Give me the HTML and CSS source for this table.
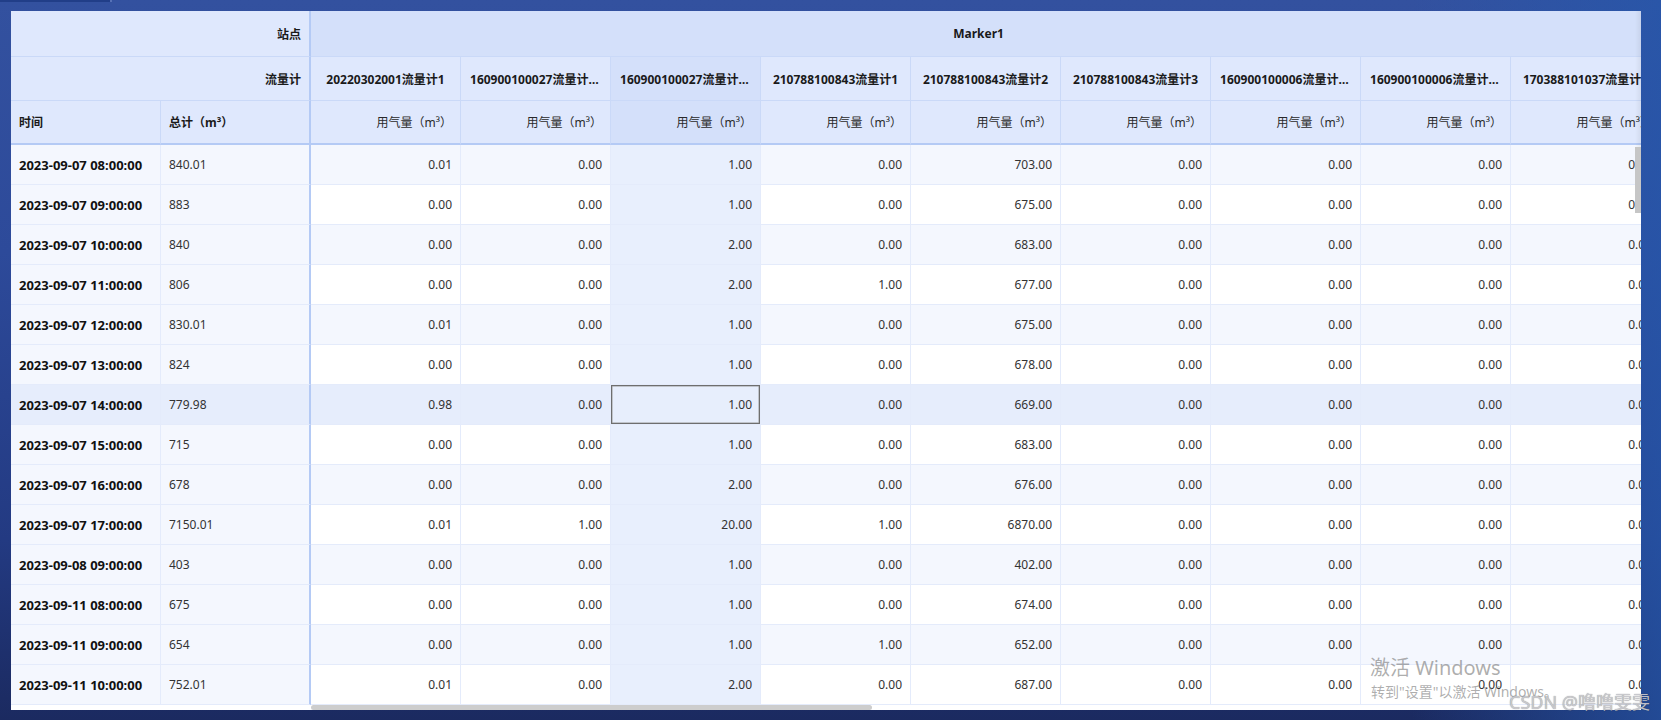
FILE: index.html
```html
<!DOCTYPE html>
<html lang="zh-CN">
<head>
<meta charset="utf-8">
<title>流量计报表</title>
<link rel="stylesheet" href="styles.css">
</head>
<body>
<div class="tab"></div>
<div class="frame">
  <div class="scroller">
    <table>
      <colgroup>
        <col class="c"><col class="c"><col class="c"><col class="c"><col class="c"><col class="c"><col class="c"><col class="c"><col class="c"><col class="c"><col class="c">
      </colgroup>
      <thead>
        <tr class="h1">
          <th colspan="2" class="corner fz2">站点</th>
          <th colspan="9" class="station"><span class="station-name">Marker1</span></th>
        </tr>
        <tr class="h2">
          <th colspan="2" class="corner fz2">流量计</th>
          <th class="meter">20220302001流量计1</th>
          <th class="meter">160900100027流量计1-1</th>
          <th class="meter hl">160900100027流量计1-2</th>
          <th class="meter">210788100843流量计1</th>
          <th class="meter">210788100843流量计2</th>
          <th class="meter">210788100843流量计3</th>
          <th class="meter">160900100006流量计1-1</th>
          <th class="meter">160900100006流量计1-2</th>
          <th class="meter">170388101037流量计1</th>
        </tr>
        <tr class="h3">
          <th class="left">时间</th>
          <th class="left fz2">总计（m³）</th>
          <th class="unit">用气量（m³）</th>
          <th class="unit">用气量（m³）</th>
          <th class="unit hl">用气量（m³）</th>
          <th class="unit">用气量（m³）</th>
          <th class="unit">用气量（m³）</th>
          <th class="unit">用气量（m³）</th>
          <th class="unit">用气量（m³）</th>
          <th class="unit">用气量（m³）</th>
          <th class="unit">用气量（m³）</th>
        </tr>
      </thead>
      <tbody>
        <tr class="odd"><td class="fz t">2023-09-07 08:00:00</td><td class="fz fz2">840.01</td><td>0.01</td><td>0.00</td><td class="hl">1.00</td><td>0.00</td><td>703.00</td><td>0.00</td><td>0.00</td><td>0.00</td><td>0.00</td></tr>
        <tr class="even"><td class="fz t">2023-09-07 09:00:00</td><td class="fz fz2">883</td><td>0.00</td><td>0.00</td><td class="hl">1.00</td><td>0.00</td><td>675.00</td><td>0.00</td><td>0.00</td><td>0.00</td><td>0.00</td></tr>
        <tr class="odd"><td class="fz t">2023-09-07 10:00:00</td><td class="fz fz2">840</td><td>0.00</td><td>0.00</td><td class="hl">2.00</td><td>0.00</td><td>683.00</td><td>0.00</td><td>0.00</td><td>0.00</td><td>0.00</td></tr>
        <tr class="even"><td class="fz t">2023-09-07 11:00:00</td><td class="fz fz2">806</td><td>0.00</td><td>0.00</td><td class="hl">2.00</td><td>1.00</td><td>677.00</td><td>0.00</td><td>0.00</td><td>0.00</td><td>0.00</td></tr>
        <tr class="odd"><td class="fz t">2023-09-07 12:00:00</td><td class="fz fz2">830.01</td><td>0.01</td><td>0.00</td><td class="hl">1.00</td><td>0.00</td><td>675.00</td><td>0.00</td><td>0.00</td><td>0.00</td><td>0.00</td></tr>
        <tr class="even"><td class="fz t">2023-09-07 13:00:00</td><td class="fz fz2">824</td><td>0.00</td><td>0.00</td><td class="hl">1.00</td><td>0.00</td><td>678.00</td><td>0.00</td><td>0.00</td><td>0.00</td><td>0.00</td></tr>
        <tr class="odd hover"><td class="fz t">2023-09-07 14:00:00</td><td class="fz fz2">779.98</td><td>0.98</td><td>0.00</td><td class="hl sel">1.00</td><td>0.00</td><td>669.00</td><td>0.00</td><td>0.00</td><td>0.00</td><td>0.00</td></tr>
        <tr class="even"><td class="fz t">2023-09-07 15:00:00</td><td class="fz fz2">715</td><td>0.00</td><td>0.00</td><td class="hl">1.00</td><td>0.00</td><td>683.00</td><td>0.00</td><td>0.00</td><td>0.00</td><td>0.00</td></tr>
        <tr class="odd"><td class="fz t">2023-09-07 16:00:00</td><td class="fz fz2">678</td><td>0.00</td><td>0.00</td><td class="hl">2.00</td><td>0.00</td><td>676.00</td><td>0.00</td><td>0.00</td><td>0.00</td><td>0.00</td></tr>
        <tr class="even"><td class="fz t">2023-09-07 17:00:00</td><td class="fz fz2">7150.01</td><td>0.01</td><td>1.00</td><td class="hl">20.00</td><td>1.00</td><td>6870.00</td><td>0.00</td><td>0.00</td><td>0.00</td><td>0.00</td></tr>
        <tr class="odd"><td class="fz t">2023-09-08 09:00:00</td><td class="fz fz2">403</td><td>0.00</td><td>0.00</td><td class="hl">1.00</td><td>0.00</td><td>402.00</td><td>0.00</td><td>0.00</td><td>0.00</td><td>0.00</td></tr>
        <tr class="even"><td class="fz t">2023-09-11 08:00:00</td><td class="fz fz2">675</td><td>0.00</td><td>0.00</td><td class="hl">1.00</td><td>0.00</td><td>674.00</td><td>0.00</td><td>0.00</td><td>0.00</td><td>0.00</td></tr>
        <tr class="odd"><td class="fz t">2023-09-11 09:00:00</td><td class="fz fz2">654</td><td>0.00</td><td>0.00</td><td class="hl">1.00</td><td>1.00</td><td>652.00</td><td>0.00</td><td>0.00</td><td>0.00</td><td>0.00</td></tr>
        <tr class="even"><td class="fz t">2023-09-11 10:00:00</td><td class="fz fz2">752.01</td><td>0.01</td><td>0.00</td><td class="hl">2.00</td><td>0.00</td><td>687.00</td><td>0.00</td><td>0.00</td><td>0.00</td><td>0.00</td></tr>
      </tbody>
    </table>
  </div>
  <div class="hbar"><div class="hthumb"></div></div>
  <div class="vshade"></div>
  <div class="vthumb"></div>
</div>
<div class="wm-title">激活 Windows</div>
<div class="wm-sub">转到"设置"以激活 Windows。</div>
<div class="wm-csdn">CSDN @噜噜雯雯</div>
</body>
</html>
```

FILE: styles.css
```css
* { box-sizing: border-box; }

html, body {
  margin: 0;
  height: 720px;
  overflow: hidden;
}

body {
  position: relative;
  font-family: "Noto Sans", "Noto Sans CJK SC", sans-serif;
  background:
    linear-gradient(90deg, rgba(40, 80, 170, 0) 85%, rgba(38, 88, 172, 0.7) 100%),
    linear-gradient(180deg, #33519f 0%, #2d4a9a 35%, #233a82 75%, #1b2a60 100%);
}

.tab {
  width: 112px;
  height: 2px;
  background: #213e88;
  border-right: 2px solid #5671b6;
}

.frame {
  position: relative;
  margin: 9px 0 0 11px;
  width: 1630px;
  height: 699px;
  background: #ffffff;
  overflow: hidden;
}

.scroller {
  height: 694px;
  overflow: hidden;
}

table {
  border-collapse: separate;
  border-spacing: 0;
  table-layout: fixed;
  width: 1650px;
  font-size: 12px;
}

col.c { width: 150px; }

th, td {
  height: 40px;
  padding: 0 8px;
  border-right: 1px solid #e4ebfb;
  border-bottom: 1px solid #e4ebfb;
  white-space: nowrap;
  overflow: hidden;
  text-overflow: ellipsis;
  vertical-align: middle;
}

th {
  background: #dfe8fd;
  border-color: #cad9f8;
  color: #1a1a1a;
  font-weight: 700;
}

.h1 th { height: 46px; }
.h2 th { height: 44px; }
.h3 th {
  height: 44px;
  border-bottom: 2px solid #b4caf5;
}

th.corner { text-align: right; }
th.station {
  background: #d4e0fa;
  text-align: center;
  padding-right: 22px;
}
th.meter {
  text-align: center;
  padding: 0 9px;
}
th.left { text-align: left; }
th.unit {
  text-align: right;
  font-weight: 400;
  color: #2a2a2a;
}
th.hl { background: #d4e0fa; }

th.fz2, td.fz2 { border-right: 2px solid #b4caf5; }

td {
  text-align: right;
  color: #333333;
}

tr.odd td { background: #f4f7fe; }
tr.even td { background: #ffffff; }
td.hl, tr.odd td.hl, tr.even td.hl { background: #e8effd; }
td.fz, tr.even td.fz { background: #f4f7fe; text-align: left; }
td.t {
  font-size: 13px;
  font-weight: 700;
  color: #111111;
}

tr.hover td, tr.hover td.fz { background: #e6edfc; }
tr.hover td.hl { background: #e7eefc; }
td.sel { box-shadow: inset 0 0 0 1px #6e6e6e, inset 0 0 0 1.5px #9a9a9a; }

.hbar {
  height: 5px;
  padding-left: 300px;
  background: #ffffff;
}
.hthumb {
  width: 561px;
  height: 5px;
  border-radius: 3px;
  background: #cdcdcd;
}

.vshade {
  position: absolute;
  right: 0;
  top: 0;
  width: 6px;
  height: 136px;
  background: linear-gradient(90deg, rgba(0, 0, 0, 0), rgba(0, 0, 0, 0.06));
}
.vthumb {
  position: absolute;
  right: 0;
  top: 136px;
  width: 6px;
  height: 66px;
  background: #c6c6c6;
}

.wm-title {
  position: absolute;
  left: 1370px;
  top: 652px;
  font-family: "Noto Sans", "Noto Sans CJK SC", sans-serif;
  font-size: 20px;
  color: rgba(120, 120, 120, 0.6);
  white-space: nowrap;
}
.wm-sub {
  position: absolute;
  left: 1371px;
  top: 681px;
  font-family: "Noto Sans", "Noto Sans CJK SC", sans-serif;
  font-size: 14px;
  color: rgba(120, 120, 120, 0.6);
  white-space: nowrap;
}
.wm-csdn {
  position: absolute;
  left: 1509px;
  top: 688px;
  font-family: "Noto Sans", "Noto Sans CJK SC", sans-serif;
  font-size: 18px;
  color: rgba(205, 205, 210, 0.92);
  text-shadow: 0 0 1px rgba(60, 60, 60, 0.6);
  white-space: nowrap;
}
```
